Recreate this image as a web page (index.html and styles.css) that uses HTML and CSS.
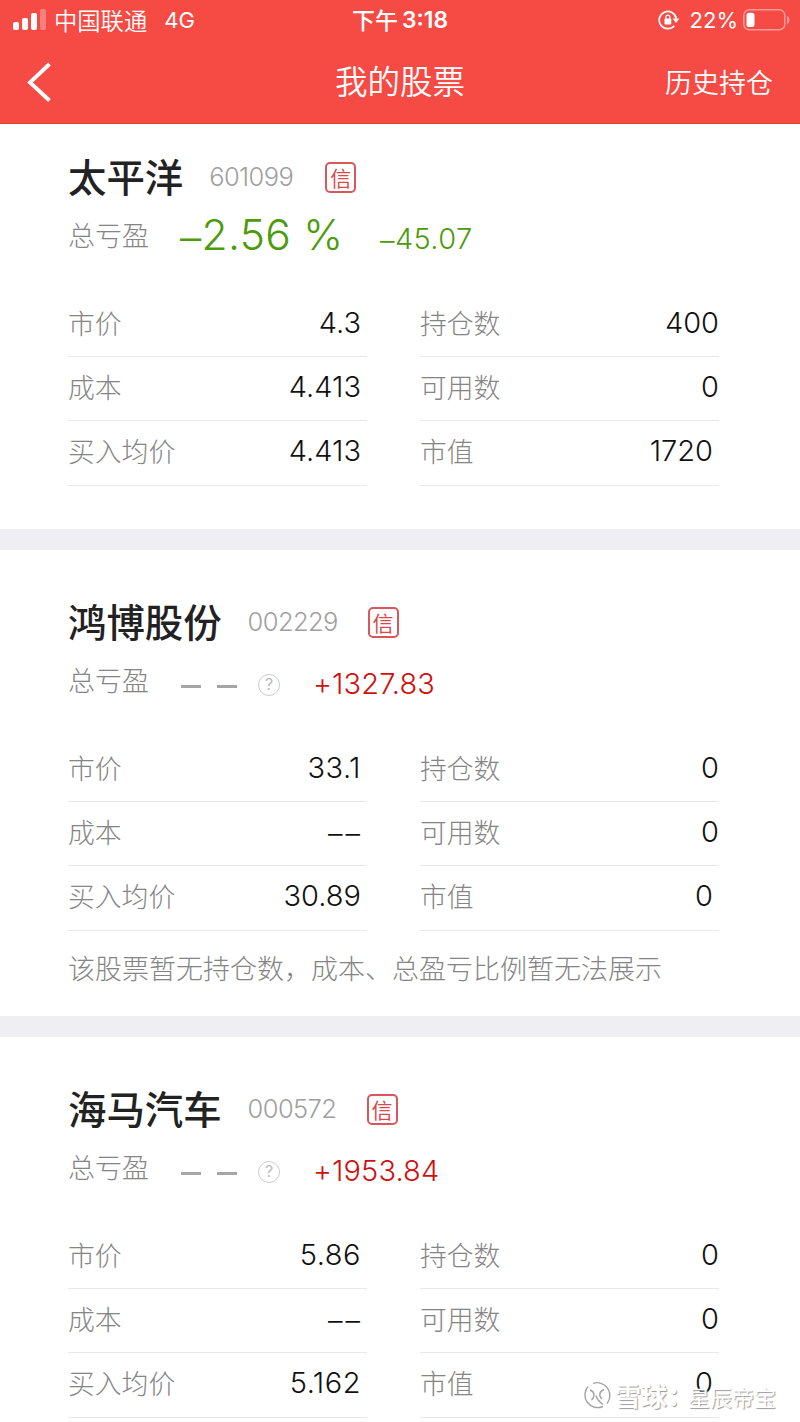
FILE: index.html
```html
<!DOCTYPE html>
<html lang="zh-CN">
<head>
<meta charset="utf-8">
<title>我的股票</title>
<link rel="stylesheet" href="styles.css">
</head>
<body>
<div class="screen">
  <header class="top">
    <div class="status">
      <div class="status-left">
        <svg class="signal" width="34" height="22" viewBox="0 0 34 22"><rect x="0" y="13" width="6" height="8" rx="2" fill="#fff"/><rect x="9" y="9" width="6" height="12" rx="2" fill="#fff"/><rect x="18" y="4" width="6" height="17" rx="2" fill="#fff"/><rect x="27" y="0" width="6" height="21" rx="2" fill="#fff" opacity=".3"/></svg>
        <span class="carrier">中国联通</span>
        <span class="network">4G</span>
      </div>
      <div class="clock"><span class="clock-cjk">下午</span><span class="clock-num">3:18</span></div>
      <div class="status-right">
        <svg class="lock" width="22" height="22" viewBox="0 0 22 22"><path d="M16.300 16.800A8.600 8.600 0 1 1 18.300 9.500" fill="none" stroke="#fff" stroke-width="1.700"/><path d="M14.600 9.500h6.800L18 14z" fill="#fff"/><rect x="6.500" y="9.500" width="6.800" height="6" rx=".8" fill="#fff"/><path d="M7.900 10V8.200a2 2 0 0 1 4 0V10" fill="none" stroke="#fff" stroke-width="1.300"/></svg>
        <span class="percent">22%</span>
        <svg class="battery" width="48" height="22" viewBox="0 0 48 22"><rect x=".8" y=".8" width="41" height="20" rx="5.500" fill="none" stroke="#fff" stroke-opacity=".45" stroke-width="1.500"/><rect x="3.500" y="3.700" width="8" height="14.400" rx="2.500" fill="#fff"/><path d="M44 7v8c3.300-1 3.300-7 0-8z" fill="#fff" opacity=".45"/></svg>
      </div>
    </div>
    <nav class="nav">
      <svg class="back" width="26" height="40" viewBox="0 0 26 40"><path d="M22.500 2L3 20.500L22.500 38.500" fill="none" stroke="#fff" stroke-width="3.800"/></svg>
      <h1 class="nav-title">我的股票</h1>
      <a class="nav-action">历史持仓</a>
    </nav>
  </header>

  <main>
    <section class="card card-first">
      <div class="head"><h2 class="name">太平洋</h2><span class="code code-a">601099</span><span class="badge">信</span></div>
      <div class="profit down"><span class="profit-label">总亏盈</span><span class="ratio"><span class="dash">–</span>2.56 %</span><span class="amount amount-down"><span class="dash">–</span>45.07</span></div>
      <div class="grid">
        <dl class="col">
          <div class="row"><dt>市价</dt><dd>4.3</dd></div>
          <div class="row"><dt>成本</dt><dd>4.413</dd></div>
          <div class="row"><dt>买入均价</dt><dd>4.413</dd></div>
        </dl>
        <dl class="col col-right">
          <div class="row"><dt>持仓数</dt><dd>400</dd></div>
          <div class="row"><dt>可用数</dt><dd>0</dd></div>
          <div class="row"><dt>市值</dt><dd>1720</dd></div>
        </dl>
      </div>
    </section>

    <section class="card card-note">
      <div class="head"><h2 class="name">鸿博股份</h2><span class="code">002229</span><span class="badge">信</span></div>
      <div class="profit up"><span class="profit-label">总亏盈</span><span class="empty"><i></i><i></i></span><span class="help">?</span><span class="amount">+1327.83</span></div>
      <div class="grid">
        <dl class="col">
          <div class="row"><dt>市价</dt><dd class="wide">33.1</dd></div>
          <div class="row"><dt>成本</dt><dd class="none">––</dd></div>
          <div class="row"><dt>买入均价</dt><dd>30.89</dd></div>
        </dl>
        <dl class="col col-right">
          <div class="row"><dt>持仓数</dt><dd>0</dd></div>
          <div class="row"><dt>可用数</dt><dd>0</dd></div>
          <div class="row"><dt>市值</dt><dd>0</dd></div>
        </dl>
      </div>
      <p class="note">该股票暂无持仓数，成本、总盈亏比例暂无法展示</p>
    </section>

    <section class="card card-last">
      <div class="head"><h2 class="name">海马汽车</h2><span class="code code-c">000572</span><span class="badge">信</span></div>
      <div class="profit up"><span class="profit-label">总亏盈</span><span class="empty"><i></i><i></i></span><span class="help">?</span><span class="amount">+1953.84</span></div>
      <div class="grid">
        <dl class="col">
          <div class="row"><dt>市价</dt><dd class="wide">5.86</dd></div>
          <div class="row"><dt>成本</dt><dd class="none">––</dd></div>
          <div class="row"><dt>买入均价</dt><dd class="wide">5.162</dd></div>
        </dl>
        <dl class="col col-right">
          <div class="row"><dt>持仓数</dt><dd>0</dd></div>
          <div class="row"><dt>可用数</dt><dd>0</dd></div>
          <div class="row"><dt>市值</dt><dd>0</dd></div>
        </dl>
      </div>
    </section>
  </main>

  <div class="watermark">
    <svg width="30" height="30" viewBox="0 0 30 30"><g fill="none" stroke="#a4a4a4" stroke-width="1.400"><path d="M6 5.500A12.800 12.800 0 0 0 21 25.500M11 2.300A12.800 12.800 0 0 1 25 22.500"/><path d="M8 9c4.500 1.500 5.500 6 1.500 10M22 8.500c-5 2-5.500 6.500-2 9.500M14 14.500c1 4 3.500 6.500 7 9"/></g></svg>
    <span class="wm-brand">雪球：</span><span class="wm-user">星辰帝宝</span>
  </div>
</div>
</body>
</html>
```
FILE: styles.css
```css
* { box-sizing: border-box; margin: 0; padding: 0; }

body {
  background: #fff;
  font-family: "Noto Sans CJK SC", sans-serif;
  font-weight: 300;
  color: #111;
}

.screen {
  position: relative;
  width: 800px;
  height: 1422px;
  overflow: hidden;
}

/* header */
.top {
  height: 124px;
  background: #f64a45;
  border-bottom: 1px solid #d84440;
  color: #fff;
}
.status {
  display: grid;
  grid-template-columns: 1fr auto 1fr;
  height: 40px;
  line-height: 40px;
}
.status-left, .status-right, .clock { display: flex; align-items: center; }
.status-left { padding-left: 13px; }
.signal { margin-right: 7px; }
.carrier { font-size: 23.300px; font-weight: 350; line-height: 38px; padding-bottom: 1px; }
.network {
  margin-left: 17px;
  font: 400 22px/40px Inter, sans-serif;
}
.clock-cjk { font-size: 23px; font-weight: 500; line-height: 38px; padding-bottom: 2px; }
.clock-num { margin-left: 4px; font: 600 22.800px/40px Inter, sans-serif; }
.status-right { justify-content: flex-end; padding-right: 9px; }
.lock { margin-right: 10px; }
.percent { margin-right: 5px; font: 400 22px/40px Inter, sans-serif; }

.nav {
  display: grid;
  grid-template-columns: 1fr auto 1fr;
  align-items: center;
  height: 83px;
  padding: 0 27px;
}
.nav-title { padding-bottom: 3px; font-size: 32.500px; font-weight: 350; line-height: 80px; }
.nav-action { justify-self: end; font-size: 27px; font-weight: 350; }

/* cards */
.card {
  height: 487px;
  padding: 44px 81px 0 68px;
  border-bottom: 21px solid #eeeef3;
}
.card-first { height: 426px; padding-top: 26px; }
.card-note { height: 487px; padding-top: 45px; }
.card-last { padding-top: 45px; border-bottom: 0; }

.head { display: flex; align-items: center; height: 54px; }
.name { padding-bottom: 3px; font-size: 38.400px; font-weight: 500; line-height: 53px; color: #222; }
.code {
  width: 90px;
  margin: 0 30px 0 26px;
  font: 300 25.500px/54px Inter, sans-serif;
  letter-spacing: -.6px;
  color: #a0a0a0;
}
.code-a { width: 86px; }
.code-c { width: 89px; }
.badge {
  width: 31px;
  height: 31px;
  border: 2px solid #d9575a;
  border-radius: 5px;
  font-size: 21px;
  font-weight: 400;
  line-height: 26px;
  text-align: center;
  color: #d9474b;
}

.profit { display: flex; align-items: center; height: 62px; }
.profit-label {
  width: 112px;
  padding-bottom: 2px;
  font-size: 27px;
  color: #858585;
}
.ratio { width: 200px; font: 300 42.500px/60px Inter, sans-serif; letter-spacing: .3px; }
.amount { padding-top: 7px; font: 300 29px/53px Inter, sans-serif; letter-spacing: .1px; }
.amount-down { letter-spacing: .4px; }
.dash { display: inline-block; transform: translateY(.07em); }
.down { color: #4d9b0d; }
.up { color: #d0100f; }
.empty { display: flex; gap: 16px; width: 78px; padding: 12px 0 0 1px; }
.empty i { width: 20px; height: 3px; background: #a6a6a6; }
.help {
  width: 22px;
  height: 22px;
  margin: 10px 33px 0 0;
  border: 1.500px solid #ccc;
  border-radius: 50%;
  font: 400 16px/19px Inter, sans-serif;
  text-align: center;
  color: #bbb;
}

.grid { display: flex; gap: 53px; padding-top: 27px; }
.col { width: 299px; }
.row {
  display: flex;
  justify-content: space-between;
  align-items: center;
  height: 64.200px;
  padding: 0 6px 3px 0;
  border-bottom: 1px solid #e8e8e8;
}
.col-right .row { padding-right: 0; }
.col-right .row:last-child { padding-right: 6px; }
dt { font-size: 26.800px; line-height: 40px; color: #858585; }
dd { font: 300 29px/40px Inter, sans-serif; }
.wide { letter-spacing: .5px; }
.none { padding-top: 3px; letter-spacing: 3px; margin-right: -2px; }

.note { margin-top: 17px; font-size: 27px; line-height: 40px; color: #858585; }

/* embossed signature over the last rows */
.watermark {
  position: absolute;
  left: 582px;
  top: 1380px;
  display: flex;
  align-items: center;
  height: 32px;
  color: #fff;
  text-shadow: 1px 1px 1px #999;
}
.wm-brand { margin-left: 3px; width: 73px; font-size: 26px; font-weight: 700; line-height: 28px; padding-bottom: 2px; white-space: nowrap; }
.wm-user { font-size: 22px; font-weight: 400; line-height: 30px; }
```
